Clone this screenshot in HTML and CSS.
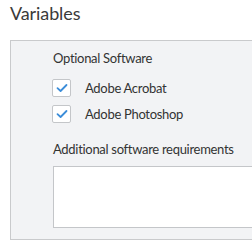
FILE: index.html
```html
<!DOCTYPE html>
<html>
<head>
<meta charset="utf-8">
<link rel="stylesheet" href="styles.css">
</head>
<body>
<div class="page">
  <h2 class="title">Variables</h2>
  <div class="panel">
    <div class="group-label">Optional Software</div>
    <label class="check">
      <span class="box"><svg width="12" height="10" viewBox="0 0 12 10"><path d="M1.5 5.2 L4.6 8 L10.5 2" fill="none" stroke="#3b8dd9" stroke-width="1.8" stroke-linecap="round" stroke-linejoin="round"/></svg></span>
      <span class="check-text">Adobe Acrobat</span>
    </label>
    <label class="check">
      <span class="box"><svg width="12" height="10" viewBox="0 0 12 10"><path d="M1.5 5.2 L4.6 8 L10.5 2" fill="none" stroke="#3b8dd9" stroke-width="1.8" stroke-linecap="round" stroke-linejoin="round"/></svg></span>
      <span class="check-text">Adobe Photoshop</span>
    </label>
    <div class="field-label">Additional software requirements</div>
    <div class="textarea"></div>
  </div>
</div>
</body>
</html>
```

FILE: styles.css
```css
html, body {
  margin: 0;
  padding: 0;
  background: #ffffff;
}
body {
  font-family: Lato, "Liberation Sans", sans-serif;
  color: #333333;
}
.page {
  width: 252px;
  height: 250px;
  overflow: hidden;
  box-sizing: border-box;
  padding: 2px 0 0 10px;
}
.title {
  margin: 0 0 16px 0;
  font-size: 18px;
  font-weight: 400;
  line-height: 22px;
  color: #3a3a3a;
  letter-spacing: -0.1px;
}
.panel {
  width: 260px;
  height: 200px;
  box-sizing: border-box;
  border: 1px solid #c9cacc;
  background: #f2f3f5;
  padding: 9px 0 0 42px;
  font-size: 13px;
  letter-spacing: -0.3px;
}
.group-label {
  line-height: 16px;
  margin-bottom: 9px;
}
.check {
  display: flex;
  align-items: center;
  gap: 14px;
  height: 26px;
}
.box {
  width: 19px;
  height: 18px;
  box-sizing: border-box;
  border: 1px solid #c4c6c9;
  border-radius: 2px;
  background: #ffffff;
  display: flex;
  align-items: center;
  justify-content: center;
  margin-left: -1px;
}
.field-label {
  margin-top: 14px;
  line-height: 16px;
  margin-bottom: 9px;
}
.textarea {
  height: 62px;
  width: 230px;
  box-sizing: border-box;
  border: 1px solid #c4c6c9;
  background: #ffffff;
}
```
